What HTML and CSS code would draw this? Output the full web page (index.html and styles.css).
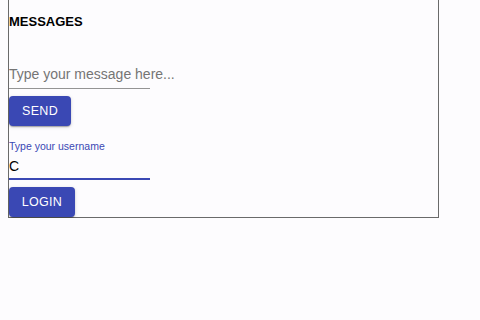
FILE: index.html
```html
<!DOCTYPE html>
<html lang="en">
<head>
    <meta charset="UTF-8">
    <meta name="viewport" content="width=device-width, initial-scale=1.0">
    <title>Chat</title>
    <link rel="stylesheet" href="styles.css">
</head>
<body>

    <div class="chat-box">
        <h3>MESSAGES</h3>

        <form class="chat-form" id="messageForm">
            <div class="field">
                <input type="text" id="message" placeholder="Type your message here...">
            </div>
            <button type="submit" class="send-btn">Send</button>
        </form>

        <form class="chat-form" id="loginForm">
            <div class="field focused">
                <label for="username">Type your username</label>
                <input type="text" id="username" value="C">
            </div>
            <button type="submit" class="login-btn">Login</button>
        </form>
    </div>

</body>
</html>
```

FILE: styles.css
```css
body {
    font-family: "Liberation Sans", Arial, sans-serif;
    background-color: #fdfcfe;
    margin: 0 8px;
    padding: 0;
}
.chat-box {
    width: 429px;
    padding-top: 14px;
    border: 1px solid #6a6a6a;
    border-top: none;
}
h3 {
    margin: 0 0 29px;
    font-size: 13px;
    line-height: 16px;
    font-weight: bold;
    color: #000;
}
.chat-form {
    margin: 0;
}
.field {
    width: 141px;
    border-bottom: 1px solid #949494;
}
.field label {
    display: block;
    font-size: 10.5px;
    line-height: 13px;
    color: #3a48b4;
}
.field input {
    display: block;
    box-sizing: border-box;
    width: 200px;
    height: 29px;
    margin: 0;
    padding: 0;
    border: none;
    background: transparent;
    font-family: inherit;
    font-size: 14px;
    color: #000;
    outline: none;
}
.field input::placeholder {
    color: #757575;
}
.field.focused {
    margin-top: 14px;
    border-bottom: 2px solid #3a48b4;
}
.field.focused input {
    height: 25px;
}
button {
    display: block;
    box-sizing: border-box;
    height: 30px;
    margin: 7px 0 0;
    padding: 0;
    border: none;
    border-radius: 4px;
    background-color: #3a48b4;
    color: white;
    font-family: inherit;
    font-size: 12.5px;
    text-transform: uppercase;
    letter-spacing: 0.3px;
    cursor: pointer;
    box-shadow: 0 2px 1px -1px rgba(0, 0, 0, 0.2), 0 1px 2px 0 rgba(0, 0, 0, 0.14), 0 1px 4px 0 rgba(0, 0, 0, 0.12);
}
.send-btn {
    width: 62px;
}
.login-btn {
    width: 66px;
}
```
